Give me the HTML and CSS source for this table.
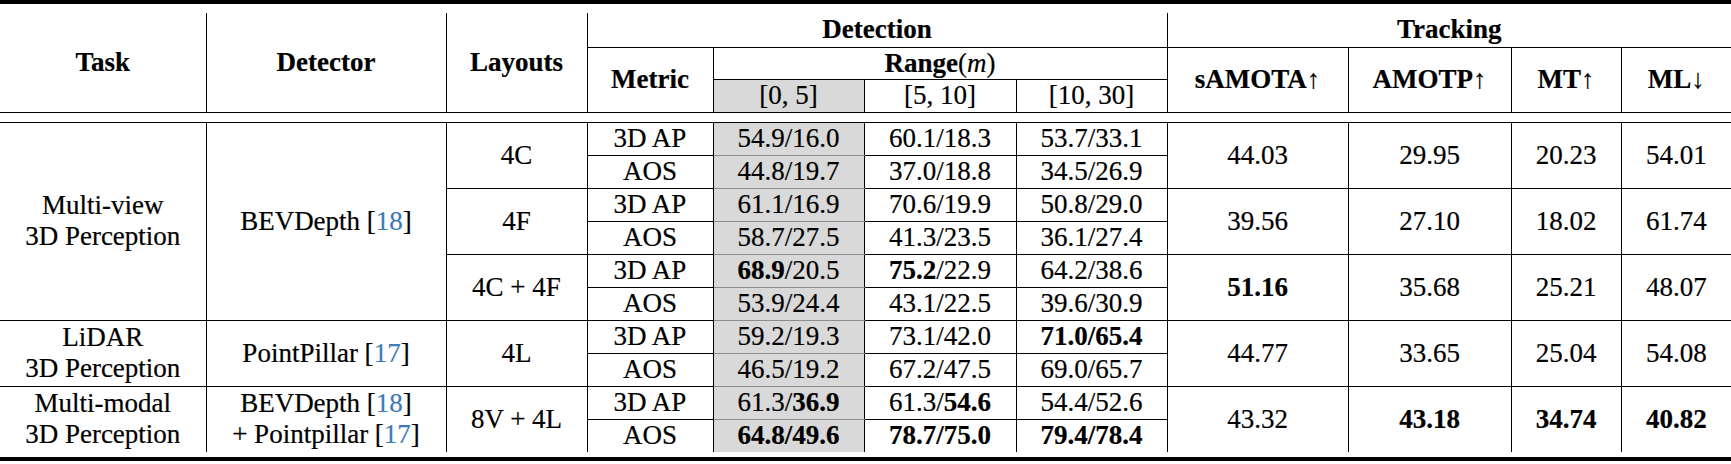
FILE: index.html
```html
<!DOCTYPE html>
<html lang="en">
<head>
  <meta charset="UTF-8" />
  <title>Detection and tracking results</title>
  <link rel="stylesheet" href="styles.css">
</head>
<body>
  <div class="sheet">
    <table class="res">
      <colgroup>
        <col class="c-task"><col class="c-det"><col class="c-lay"><col class="c-met">
        <col class="c-rng"><col class="c-rng2"><col class="c-rng">
        <col class="c-samota"><col class="c-amotp"><col class="c-mt"><col class="c-ml">
      </colgroup>
      <thead>
        <tr class="gap gap-top"><td colspan="11"></td></tr>
        <tr class="h1">
          <th rowspan="3">Task</th>
          <th rowspan="3">Detector</th>
          <th rowspan="3">Layouts</th>
          <th colspan="4">Detection</th>
          <th colspan="4" class="nr">Tracking</th>
        </tr>
        <tr class="h2">
          <th rowspan="2">Metric</th>
          <th colspan="3">Range<span class="unit">(<i>m</i>)</span></th>
          <th rowspan="2">sAMOTA<span class="arw">↑</span></th>
          <th rowspan="2">AMOTP<span class="arw">↑</span></th>
          <th rowspan="2">MT<span class="arw">↑</span></th>
          <th rowspan="2" class="nr">ML<span class="arw">↓</span></th>
        </tr>
        <tr class="h3">
          <th class="sh rng">[0, 5]</th>
          <th class="rng">[5, 10]</th>
          <th class="rng">[10, 30]</th>
        </tr>
        <tr class="gap dbl"><td colspan="11"></td></tr>
      </thead>
      <tbody>
        <!-- multi-view -->
        <tr>
          <td rowspan="6">Multi-view<br>3D Perception</td>
          <td rowspan="6">BEVDepth [<span class="cite">18</span>]</td>
          <td rowspan="2">4C</td>
          <td>3D AP</td>
          <td class="sh">54.9/16.0</td>
          <td>60.1/18.3</td>
          <td>53.7/33.1</td>
          <td rowspan="2">44.03</td>
          <td rowspan="2">29.95</td>
          <td rowspan="2">20.23</td>
          <td rowspan="2" class="nr">54.01</td>
        </tr>
        <tr>
          <td>AOS</td>
          <td class="sh">44.8/19.7</td>
          <td>37.0/18.8</td>
          <td>34.5/26.9</td>
        </tr>
        <tr>
          <td rowspan="2">4F</td>
          <td>3D AP</td>
          <td class="sh">61.1/16.9</td>
          <td>70.6/19.9</td>
          <td>50.8/29.0</td>
          <td rowspan="2">39.56</td>
          <td rowspan="2">27.10</td>
          <td rowspan="2">18.02</td>
          <td rowspan="2" class="nr">61.74</td>
        </tr>
        <tr>
          <td>AOS</td>
          <td class="sh">58.7/27.5</td>
          <td>41.3/23.5</td>
          <td>36.1/27.4</td>
        </tr>
        <tr>
          <td rowspan="2">4C + 4F</td>
          <td>3D AP</td>
          <td class="sh"><b>68.9</b>/20.5</td>
          <td><b>75.2</b>/22.9</td>
          <td>64.2/38.6</td>
          <td rowspan="2"><b>51.16</b></td>
          <td rowspan="2">35.68</td>
          <td rowspan="2">25.21</td>
          <td rowspan="2" class="nr">48.07</td>
        </tr>
        <tr>
          <td>AOS</td>
          <td class="sh">53.9/24.4</td>
          <td>43.1/22.5</td>
          <td>39.6/30.9</td>
        </tr>
        <!-- lidar -->
        <tr>
          <td rowspan="2">LiDAR<br>3D Perception</td>
          <td rowspan="2">PointPillar [<span class="cite">17</span>]</td>
          <td rowspan="2">4L</td>
          <td>3D AP</td>
          <td class="sh">59.2/19.3</td>
          <td>73.1/42.0</td>
          <td><b>71.0/65.4</b></td>
          <td rowspan="2">44.77</td>
          <td rowspan="2">33.65</td>
          <td rowspan="2">25.04</td>
          <td rowspan="2" class="nr">54.08</td>
        </tr>
        <tr>
          <td>AOS</td>
          <td class="sh">46.5/19.2</td>
          <td>67.2/47.5</td>
          <td>69.0/65.7</td>
        </tr>
        <!-- multi-modal -->
        <tr>
          <td rowspan="2">Multi-modal<br>3D Perception</td>
          <td rowspan="2">BEVDepth [<span class="cite">18</span>]<br>+ Pointpillar [<span class="cite">17</span>]</td>
          <td rowspan="2">8V + 4L</td>
          <td>3D AP</td>
          <td class="sh">61.3/<b>36.9</b></td>
          <td>61.3/<b>54.6</b></td>
          <td>54.4/52.6</td>
          <td rowspan="2">43.32</td>
          <td rowspan="2"><b>43.18</b></td>
          <td rowspan="2"><b>34.74</b></td>
          <td rowspan="2" class="nr"><b>40.82</b></td>
        </tr>
        <tr>
          <td>AOS</td>
          <td class="sh"><b>64.8/49.6</b></td>
          <td><b>78.7/75.0</b></td>
          <td><b>79.4/78.4</b></td>
        </tr>
        <tr class="gap gap-bot"><td colspan="11"></td></tr>
      </tbody>
    </table>
  </div>
</body>
</html>
```

FILE: styles.css
```css
body {
  margin: 0;
  background: #fff;
  color: #000;
  font-family: "Liberation Serif", "Times New Roman", Times, serif;
}

/* top and bottom rule of the table */
.sheet {
  width: 1731px;
  border-top: 4px solid #000;
  border-bottom: 4px solid #000;
}

.res {
  width: 100%;
  table-layout: fixed;
  border-collapse: collapse;
  font-size: 27px;
  -webkit-text-stroke: 0.2px #000;
}

.c-task { width: 206px; }
.c-det { width: 240px; }
.c-lay { width: 141px; }
.c-met { width: 126px; }
.c-rng { width: 151px; }
.c-rng2 { width: 152px; }
.c-samota { width: 181px; }
.c-amotp { width: 163px; }
.c-mt { width: 110px; }
.c-ml { width: 110px; }

.res th,
.res td {
  padding: 0;
  text-align: center;
  vertical-align: middle;
  line-height: 31px;
  white-space: nowrap;
  border-right: 1px solid #000;
  border-bottom: 1px solid #000;
}

.res .nr {
  border-right: none;
}

.res th {
  font-weight: bold;
}

.res th.rng {
  font-weight: normal;
}

.unit, .arw {
  font-weight: normal;
}

.h1 { height: 34px; }
.h2 { height: 32px; }
.h3 { height: 33px; }
.res tbody tr { height: 33px; }

/* spacer rows: no vertical lines run through them */
.res .gap td {
  border: none;
  padding: 0;
}
.res .gap-top { height: 9px; }
.res tbody tr.gap-bot { height: 5px; }
.res .gap-bot td {
  border-top-style: hidden;
}

/* double rule under the header */
.res .dbl { height: 10px; }
.res .dbl td {
  border-top: 1px solid #000;
  border-bottom: 1px solid #000;
}

.sh {
  background: #d9d9d9;
}
.res td.sh {
  border-bottom-color: #8c8c8c;
}

.cite {
  color: #3f7cb6;
  -webkit-text-stroke: 0.2px #3f7cb6;
}
```
